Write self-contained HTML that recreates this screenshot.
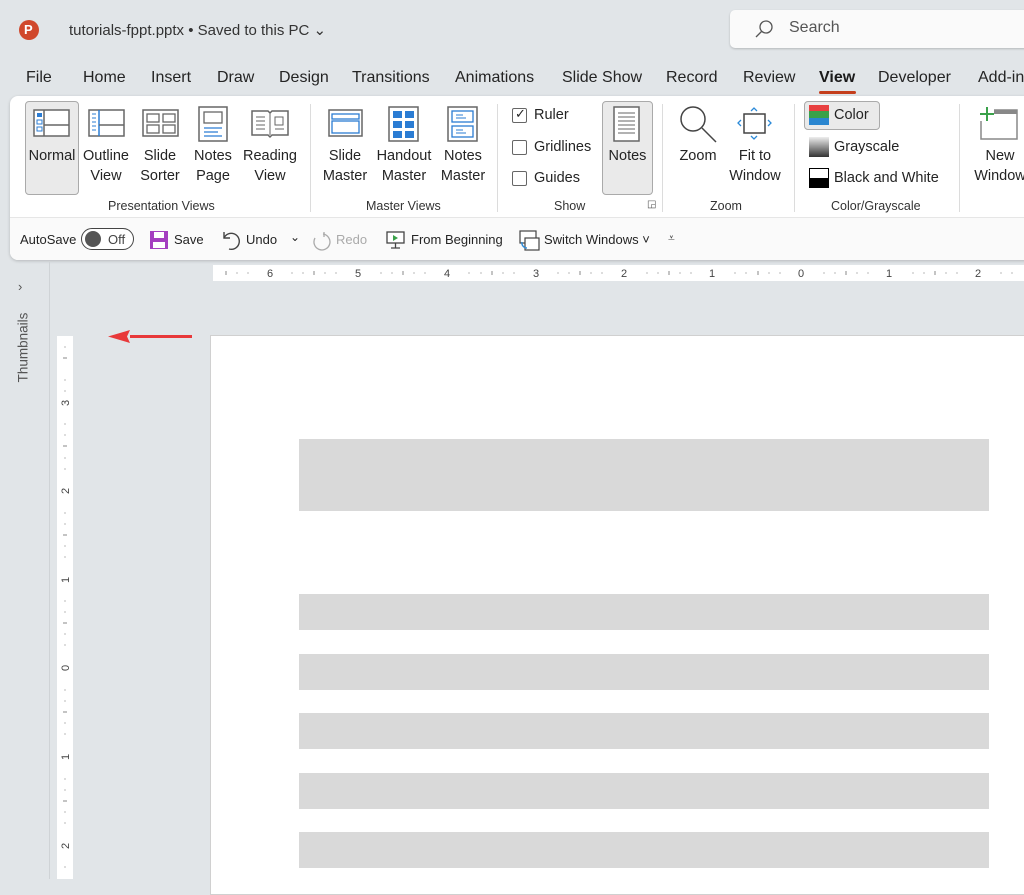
<!DOCTYPE html>
<html><head><meta charset="utf-8"><style>
*{margin:0;padding:0;box-sizing:border-box}
body{width:1024px;height:879px;overflow:hidden;background:#e1e5e8;font-family:"Liberation Sans",sans-serif;color:#242424;position:relative}
.a{position:absolute;white-space:nowrap}
.tab{position:absolute;top:69px;font-size:16px;color:#242424;white-space:nowrap}
.lbl{position:absolute;font-size:14.5px;text-align:center;line-height:20px;color:#242424}
.grp{position:absolute;top:199px;font-size:12.5px;color:#333}
.sep{position:absolute;top:104px;width:1px;height:108px;background:#dcdcdc}
.q{position:absolute;top:232px;font-size:13px;color:#242424;white-space:nowrap}
.bar{position:absolute;left:299px;width:690px;background:#d9d9d9}
.cb{position:absolute;width:15px;height:15px;border:1px solid #666;border-radius:2px;background:#fff}
</style></head><body>
<div class="a" style="left:19px;top:20px;width:20px;height:20px;border-radius:50%;background:#d0482c"></div>
<div class="a" style="left:24px;top:22px;font-size:13px;font-weight:bold;color:#fff">P</div>
<div class="a" style="left:69px;top:21px;font-size:15px;color:#333">tutorials-fppt.pptx • Saved to this PC ⌄</div>
<div class="a" style="left:730px;top:10px;width:300px;height:38px;background:#fafafa;border-radius:5px;box-shadow:0 1px 2px rgba(0,0,0,.2)"></div>
<svg class="a" style="left:754px;top:19px" width="20" height="20"><circle cx="12" cy="8" r="6" fill="none" stroke="#555" stroke-width="1.3"/><line x1="7.5" y1="12.5" x2="2" y2="18" stroke="#555" stroke-width="1.3"/></svg>
<div class="a" style="left:789px;top:19px;font-size:16px;color:#555">Search</div>
<div class="tab" style="left:26px">File</div>
<div class="tab" style="left:83px">Home</div>
<div class="tab" style="left:151px">Insert</div>
<div class="tab" style="left:217px">Draw</div>
<div class="tab" style="left:279px">Design</div>
<div class="tab" style="left:352px">Transitions</div>
<div class="tab" style="left:455px">Animations</div>
<div class="tab" style="left:562px">Slide Show</div>
<div class="tab" style="left:666px">Record</div>
<div class="tab" style="left:743px">Review</div>
<div class="tab" style="left:819px;font-weight:bold;color:#1a1a1a">View</div>
<div class="a" style="left:819px;top:91px;width:37px;height:3px;background:#c43e1c;border-radius:2px"></div>
<div class="tab" style="left:878px">Developer</div>
<div class="tab" style="left:978px">Add-ins</div>
<div class="a" style="left:10px;top:96px;width:1030px;height:164px;background:#fff;border-radius:8px;box-shadow:0 1px 3px rgba(0,0,0,.2)"></div>
<div class="a" style="left:10px;top:217px;width:1030px;height:43px;background:#fafafa;border-top:1px solid #e6e6e6;border-radius:0 0 0 8px"></div>
<div class="a" style="left:25px;top:101px;width:54px;height:94px;background:#eaeaea;border:1px solid #aaa;border-radius:4px"></div>
<div class="a" style="left:602px;top:101px;width:51px;height:94px;background:#eaeaea;border:1px solid #aaa;border-radius:4px"></div>
<div class="a" style="left:804px;top:101px;width:76px;height:29px;background:#eaeaea;border:1px solid #aaa;border-radius:4px"></div>
<svg class="a" style="left:33px;top:108px" width="40" height="32"><rect x="1" y="2" width="35" height="26" fill="#fff" stroke="#666" stroke-width="1.5"/><line x1="11" y1="2" x2="11" y2="28" stroke="#666" stroke-width="1.5"/><line x1="11" y1="17" x2="36" y2="17" stroke="#666" stroke-width="1.5"/><rect x="4" y="5" width="5" height="4" fill="#2b7cd3"/><rect x="4" y="12" width="5" height="4" fill="none" stroke="#2b7cd3"/><rect x="4" y="19" width="5" height="4" fill="none" stroke="#2b7cd3"/></svg>
<svg class="a" style="left:88px;top:108px" width="40" height="32"><rect x="1" y="2" width="35" height="26" fill="#fff" stroke="#666" stroke-width="1.5"/><line x1="11" y1="2" x2="11" y2="28" stroke="#2b7cd3" stroke-width="1.5"/><line x1="11" y1="17" x2="36" y2="17" stroke="#666" stroke-width="1.5"/><path d="M4 6h4M4 10h4M4 14h4M4 18h4M4 22h4" stroke="#2b7cd3"/></svg>
<svg class="a" style="left:142px;top:108px" width="40" height="32"><rect x="1" y="2" width="35" height="26" fill="#fff" stroke="#666" stroke-width="1.5"/><rect x="5" y="6" width="12" height="8" fill="none" stroke="#666" stroke-width="1.3"/><rect x="21" y="6" width="12" height="8" fill="none" stroke="#666" stroke-width="1.3"/><rect x="5" y="17" width="12" height="8" fill="none" stroke="#666" stroke-width="1.3"/><rect x="21" y="17" width="12" height="8" fill="none" stroke="#666" stroke-width="1.3"/></svg>
<svg class="a" style="left:198px;top:106px" width="32" height="36"><rect x="1" y="1" width="28" height="34" fill="#fff" stroke="#666" stroke-width="1.5"/><rect x="6" y="6" width="18" height="11" fill="none" stroke="#666" stroke-width="1.3"/><path d="M6 22h18M6 26h14M6 30h18" stroke="#2b7cd3" stroke-width="1.3"/></svg>
<svg class="a" style="left:250px;top:108px" width="40" height="32"><path d="M2 3h16l2 2l2-2h16v24h-16l-2 2l-2-2h-16z" fill="#fff" stroke="#666" stroke-width="1.5"/><line x1="20" y1="5" x2="20" y2="27" stroke="#666"/><path d="M6 9h9M6 13h9M6 17h9M6 21h9" stroke="#666"/><rect x="25" y="9" width="8" height="8" fill="none" stroke="#666"/><path d="M25 21h9" stroke="#666"/></svg>
<div class="lbl" style="left:25px;top:146px;width:54px">Normal</div>
<div class="lbl" style="left:80px;top:146px;width:52px">Outline<br>View</div>
<div class="lbl" style="left:135px;top:146px;width:50px">Slide<br>Sorter</div>
<div class="lbl" style="left:188px;top:146px;width:50px">Notes<br>Page</div>
<div class="lbl" style="left:240px;top:146px;width:60px">Reading<br>View</div>
<div class="grp" style="left:108px">Presentation Views</div>
<div class="sep" style="left:310px"></div>
<svg class="a" style="left:327px;top:108px" width="40" height="32"><rect x="2" y="2" width="33" height="26" fill="#fff" stroke="#666" stroke-width="1.5"/><rect x="5" y="6" width="27" height="5" fill="none" stroke="#2b7cd3" stroke-width="1.3"/><rect x="5" y="13" width="27" height="12" fill="none" stroke="#2b7cd3" stroke-width="1.3"/></svg>
<svg class="a" style="left:387px;top:106px" width="34" height="36"><rect x="2" y="1" width="29" height="34" fill="#fff" stroke="#666" stroke-width="1.5"/><g fill="#2b7cd3"><rect x="6" y="5" width="9" height="7"/><rect x="18" y="5" width="9" height="7"/><rect x="6" y="15" width="9" height="7"/><rect x="18" y="15" width="9" height="7"/><rect x="6" y="25" width="9" height="7"/><rect x="18" y="25" width="9" height="7"/></g></svg>
<svg class="a" style="left:446px;top:106px" width="34" height="36"><rect x="2" y="1" width="29" height="34" fill="#fff" stroke="#666" stroke-width="1.5"/><rect x="6" y="5" width="21" height="11" fill="none" stroke="#2b7cd3" stroke-width="1.3"/><rect x="6" y="20" width="21" height="11" fill="none" stroke="#2b7cd3" stroke-width="1.3"/><path d="M10 9h7M10 12h10M10 24h7M10 27h10" stroke="#2b7cd3"/></svg>
<div class="lbl" style="left:320px;top:146px;width:50px">Slide<br>Master</div>
<div class="lbl" style="left:373px;top:146px;width:62px">Handout<br>Master</div>
<div class="lbl" style="left:437px;top:146px;width:52px">Notes<br>Master</div>
<div class="grp" style="left:366px">Master Views</div>
<div class="sep" style="left:497px"></div>
<div class="cb" style="left:512px;top:108px"></div><div class="a" style="left:515px;top:106px;font-size:13px">✓</div>
<div class="a" style="left:534px;top:107px;font-size:14.5px">Ruler</div>
<div class="cb" style="left:512px;top:140px"></div><div class="a" style="left:534px;top:139px;font-size:14.5px">Gridlines</div>
<div class="cb" style="left:512px;top:171px"></div><div class="a" style="left:534px;top:170px;font-size:14.5px">Guides</div>
<svg class="a" style="left:612px;top:106px" width="30" height="38"><rect x="2" y="1" width="25" height="34" fill="#fff" stroke="#666" stroke-width="1.5"/><path d="M6 7h17M6 11h17M6 15h17M6 19h17M6 23h17M6 27h17" stroke="#666"/></svg>
<div class="lbl" style="left:602px;top:146px;width:51px">Notes</div>
<div class="grp" style="left:554px">Show</div>
<div class="a" style="left:647px;top:199px;font-size:10px;color:#555">◲</div>
<div class="sep" style="left:662px"></div>
<svg class="a" style="left:678px;top:104px" width="42" height="42"><circle cx="15" cy="15" r="12" fill="#fff" stroke="#444" stroke-width="1.5"/><line x1="24" y1="24" x2="38" y2="38" stroke="#444" stroke-width="1.5"/></svg>
<div class="lbl" style="left:673px;top:146px;width:50px">Zoom</div>
<svg class="a" style="left:736px;top:106px" width="38" height="38"><rect x="8" y="8" width="21" height="19" fill="#fff" stroke="#444" stroke-width="1.5"/><path d="M15 5l3-3l3 3M15 30l3 3l3-3M5 14l-3 3l3 3M32 14l3 3l-3 3" fill="none" stroke="#2b8ad8" stroke-width="1.3"/></svg>
<div class="lbl" style="left:725px;top:146px;width:60px">Fit to<br>Window</div>
<div class="grp" style="left:710px">Zoom</div>
<div class="sep" style="left:794px"></div>
<svg class="a" style="left:809px;top:105px" width="20" height="20"><rect y="0" width="20" height="6" fill="#e84040"/><rect y="6" width="20" height="7" fill="#3aa14a"/><rect y="13" width="20" height="7" fill="#2a86d0"/></svg>
<div class="a" style="left:834px;top:107px;font-size:14.5px">Color</div>
<svg class="a" style="left:809px;top:137px" width="20" height="20"><defs><linearGradient id="g" x1="0" y1="0" x2="0" y2="1"><stop offset="0" stop-color="#eee"/><stop offset="1" stop-color="#333"/></linearGradient></defs><rect width="20" height="20" fill="url(#g)"/></svg>
<div class="a" style="left:834px;top:139px;font-size:14.5px">Grayscale</div>
<svg class="a" style="left:809px;top:168px" width="20" height="20"><rect x=".5" y=".5" width="19" height="19" fill="#fff" stroke="#000"/><rect y="10" width="20" height="10" fill="#000"/></svg>
<div class="a" style="left:834px;top:170px;font-size:14.5px">Black and White</div>
<div class="grp" style="left:831px">Color/Grayscale</div>
<div class="sep" style="left:959px"></div>
<svg class="a" style="left:978px;top:106px" width="40" height="34"><rect x="3" y="4" width="36" height="29" fill="#fff" stroke="#888" stroke-width="1.5"/><rect x="3" y="4" width="36" height="4" fill="#888"/><rect x="2" y="1" width="14" height="14" fill="#fff"/><path d="M9 1v14M2 8h14" stroke="#3aa14a" stroke-width="2"/></svg>
<div class="lbl" style="left:968px;top:146px;width:64px">New<br>Window</div>
<div class="q" style="left:20px">AutoSave</div>
<div class="a" style="left:81px;top:228px;width:53px;height:22px;border:1px solid #444;border-radius:11px;background:#fff"></div>
<div class="a" style="left:85px;top:231px;width:16px;height:16px;border-radius:50%;background:#555"></div>
<div class="q" style="left:108px;color:#444">Off</div>
<svg class="a" style="left:149px;top:230px" width="20" height="20"><rect x="1" y="1" width="18" height="18" fill="#a43ec0"/><rect x="5" y="2" width="10" height="6" fill="#fff"/><rect x="4" y="12" width="12" height="6" fill="#fff"/></svg>
<div class="q" style="left:174px">Save</div>
<svg class="a" style="left:220px;top:229px" width="22" height="22"><path d="M4 3v6h6" fill="none" stroke="#444" stroke-width="1.4"/><path d="M4 9a8 8 0 1 1 5 11" fill="none" stroke="#444" stroke-width="1.4"/></svg>
<div class="q" style="left:246px">Undo</div>
<div class="a" style="left:290px;top:230px;font-size:12px">⌄</div>
<svg class="a" style="left:310px;top:229px" width="22" height="22"><path d="M14 3v5" fill="none" stroke="#aaa" stroke-width="1.3"/><path d="M13 5a8 8 0 1 1-8 4" fill="none" stroke="#aaa" stroke-width="1.3"/></svg>
<div class="q" style="left:336px;color:#aaa">Redo</div>
<svg class="a" style="left:386px;top:230px" width="20" height="20"><rect x="1" y="2" width="17" height="11" fill="#fff" stroke="#444" stroke-width="1.3"/><path d="M7 5l5 3l-5 3z" fill="#3aa14a"/><path d="M9.5 13v5M5 18h9" stroke="#444" stroke-width="1.3"/></svg>
<div class="q" style="left:411px">From Beginning</div>
<svg class="a" style="left:518px;top:230px" width="22" height="22"><rect x="2" y="1" width="16" height="12" fill="#fff" stroke="#444" stroke-width="1.2"/><rect x="7" y="8" width="14" height="12" fill="#fff" stroke="#444" stroke-width="1.2"/><path d="M4 12a5 5 0 0 0 5 6" fill="none" stroke="#2b8ad8" stroke-width="1.4"/></svg>
<div class="q" style="left:544px">Switch Windows ˅</div>
<div class="a" style="left:668px;top:231px;font-size:12px;color:#444">⩡</div>
<div class="a" style="left:49px;top:262px;width:1px;height:617px;background:#cfd3d6"></div>
<div class="a" style="left:18px;top:279px;font-size:13px;color:#555">›</div>
<div class="a" style="left:-12px;top:340px;font-size:13.5px;color:#555;transform:rotate(-90deg);width:70px;text-align:center">Thumbnails</div>
<div class="a" style="left:213px;top:265px;width:811px;height:16px;background:#fff"></div>
<svg class="a" style="left:213px;top:265px" width="811" height="16" font-family="Liberation Sans" font-size="11" fill="#444">
<g stroke="#888"><path d="M13 6v4M101 6v4M190 6v4M279 6v4M367 6v4M456 6v4M545 6v4M633 6v4M722 6v4"/></g>
<g fill="#888"><circle cx="24" cy="8" r=".6"/><circle cx="35" cy="8" r=".6"/><circle cx="79" cy="8" r=".6"/><circle cx="90" cy="8" r=".6"/><circle cx="112" cy="8" r=".6"/><circle cx="123" cy="8" r=".6"/><circle cx="168" cy="8" r=".6"/><circle cx="179" cy="8" r=".6"/><circle cx="201" cy="8" r=".6"/><circle cx="212" cy="8" r=".6"/><circle cx="256" cy="8" r=".6"/><circle cx="268" cy="8" r=".6"/><circle cx="290" cy="8" r=".6"/><circle cx="301" cy="8" r=".6"/><circle cx="345" cy="8" r=".6"/><circle cx="356" cy="8" r=".6"/><circle cx="378" cy="8" r=".6"/><circle cx="389" cy="8" r=".6"/><circle cx="434" cy="8" r=".6"/><circle cx="445" cy="8" r=".6"/><circle cx="467" cy="8" r=".6"/><circle cx="478" cy="8" r=".6"/><circle cx="522" cy="8" r=".6"/><circle cx="533" cy="8" r=".6"/><circle cx="556" cy="8" r=".6"/><circle cx="567" cy="8" r=".6"/><circle cx="611" cy="8" r=".6"/><circle cx="622" cy="8" r=".6"/><circle cx="644" cy="8" r=".6"/><circle cx="655" cy="8" r=".6"/><circle cx="700" cy="8" r=".6"/><circle cx="711" cy="8" r=".6"/><circle cx="733" cy="8" r=".6"/><circle cx="744" cy="8" r=".6"/><circle cx="788" cy="8" r=".6"/><circle cx="799" cy="8" r=".6"/></g>
<text x="54" y="12">6</text><text x="142" y="12">5</text><text x="231" y="12">4</text><text x="320" y="12">3</text><text x="408" y="12">2</text><text x="496" y="12">1</text><text x="585" y="12">0</text><text x="673" y="12">1</text><text x="762" y="12">2</text>
</svg>
<div class="a" style="left:57px;top:336px;width:16px;height:543px;background:#fff"></div>
<svg class="a" style="left:57px;top:336px" width="16" height="543" font-family="Liberation Sans" font-size="11" fill="#444">
<g stroke="#888"><path d="M6 22h4M6 110h4M6 199h4M6 287h4M6 376h4M6 465h4"/></g>
<g fill="#888"><circle cx="8" cy="11" r=".6"/><circle cx="8" cy="44" r=".6"/><circle cx="8" cy="55" r=".6"/><circle cx="8" cy="88" r=".6"/><circle cx="8" cy="99" r=".6"/><circle cx="8" cy="122" r=".6"/><circle cx="8" cy="133" r=".6"/><circle cx="8" cy="177" r=".6"/><circle cx="8" cy="188" r=".6"/><circle cx="8" cy="210" r=".6"/><circle cx="8" cy="221" r=".6"/><circle cx="8" cy="265" r=".6"/><circle cx="8" cy="276" r=".6"/><circle cx="8" cy="298" r=".6"/><circle cx="8" cy="309" r=".6"/><circle cx="8" cy="354" r=".6"/><circle cx="8" cy="365" r=".6"/><circle cx="8" cy="387" r=".6"/><circle cx="8" cy="398" r=".6"/><circle cx="8" cy="443" r=".6"/><circle cx="8" cy="454" r=".6"/><circle cx="8" cy="476" r=".6"/><circle cx="8" cy="487" r=".6"/><circle cx="8" cy="531" r=".6"/></g>
<g transform="rotate(-90)"><text x="-70" y="12">3</text><text x="-158" y="12">2</text><text x="-247" y="12">1</text><text x="-335" y="12">0</text><text x="-424" y="12">1</text><text x="-513" y="12">2</text></g>
</svg>
<svg class="a" style="left:105px;top:327px" width="90" height="20"><path d="M87 9.5H25" stroke="#e8393a" stroke-width="3"/><path d="M3 9.5L25 3L22 9.5L25 16Z" fill="#e8393a"/></svg>
<div class="a" style="left:210px;top:335px;width:820px;height:560px;background:#fff;border:1px solid #d0d0d0"></div>
<div class="bar" style="top:439px;height:72px"></div>
<div class="bar" style="top:594px;height:36px"></div>
<div class="bar" style="top:654px;height:36px"></div>
<div class="bar" style="top:713px;height:36px"></div>
<div class="bar" style="top:773px;height:36px"></div>
<div class="bar" style="top:832px;height:36px"></div>
</body></html>
